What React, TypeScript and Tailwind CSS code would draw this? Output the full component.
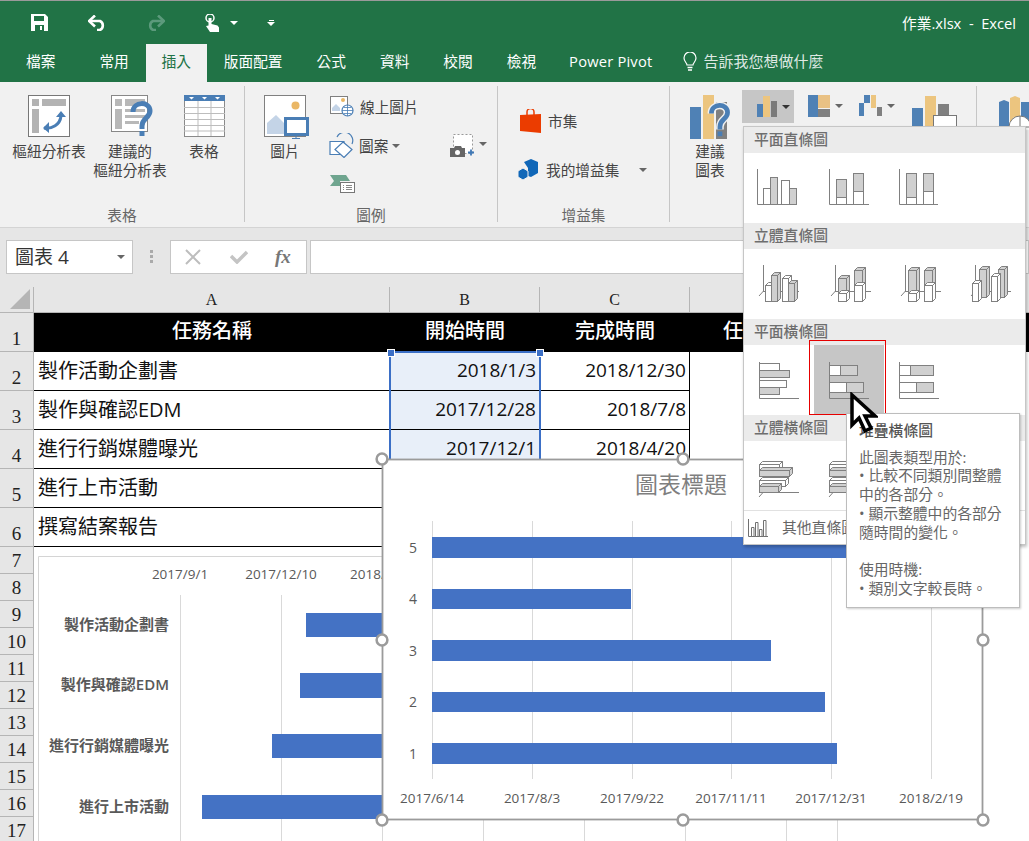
import React from 'react';

const Caret = ({ color = '#666' }: { color?: string }) => (
  <svg width="8" height="4" viewBox="0 0 8 4" className="shrink-0"><path d="M0 0h8L4 4z" fill={color} /></svg>
);

const Save = () => (
  <svg width="17" height="17" viewBox="0 0 17 17"><path d="M0 0h14l3 3v14H0z" fill="#fff" /><path d="M3 2h10v5H3z" fill="#217346" /><path d="M4 11h9v6H4z" fill="#217346" /><path d="M9 12h2v4H9z" fill="#fff" /></svg>
);
const Undo = ({ color = '#fff' }: { color?: string }) => (
  <svg width="19" height="16" viewBox="0 0 19 16" fill="none"><path d="M2 6h10a5 5 0 0 1 0 9H9" stroke={color} strokeWidth="2.6" /><path d="M7 0.5L1 6l6 5.5" stroke={color} strokeWidth="2.6" /></svg>
);
const Redo = ({ color = '#fff' }: { color?: string }) => (
  <svg width="19" height="16" viewBox="0 0 19 16" fill="none"><path d="M17 6H7a5 5 0 0 0 0 9h3" stroke={color} strokeWidth="2.6" /><path d="M12 0.5L18 6l-6 5.5" stroke={color} strokeWidth="2.6" /></svg>
);
const Touch = () => (
  <svg width="15" height="18" viewBox="0 0 15 18"><circle cx="5" cy="4" r="4" fill="none" stroke="#fff" strokeWidth="1.5" /><path d="M3.5 4h3v6l6 1.5 1.5 2V18H5L1 12l2.5-.5z" fill="#fff" /></svg>
);
const Bulb = () => (
  <svg width="14" height="20" viewBox="0 0 14 20" fill="none" stroke="#fff" strokeWidth="1.2"><path d="M4 13c0-2-3-3.500-3-7a6 6 0 0 1 12 0c0 3.500-3 5-3 7z" /><path d="M4.500 15.500h5M5 18h4" strokeWidth="1.500" /></svg>
);

const Pivot = () => (
  <svg width="42" height="42" viewBox="0 0 42 42"><rect x=".5" y=".5" width="41" height="41" fill="#fff" stroke="#777" /><path d="M4 4h7v7H4zM14 4h24v7H14zM4 14h7v24H4z" fill="#b3b3b3" /><path d="M16 33c8 1 16-3 17-12" fill="none" stroke="#4a7eb5" strokeWidth="3" /><path d="M28 22l5-6 5 6zM21 27l-6 6 6 5z" fill="#4a7eb5" /></svg>
);
const Question = ({ color = '#4a7eb5' }: { color?: string }) => (
  <g fill="none" stroke={color} strokeWidth="5"><path d="M-8-8c0-11 17-11 17-1 0 7-8 7-8 15v3" /><path d="M1 11v5" /></g>
);
const PivotHelp = () => (
  <svg width="45" height="45" viewBox="0 0 45 45"><rect x=".5" y=".5" width="36" height="36" fill="#fff" stroke="#888" /><path d="M4 4h7v7H4zM14 4h20v7H14zM4 14h7v20H4zM14 14h20v3H14zM14 20h20v3H14zM14 26h14v3H14z" fill="#b8b8b8" /><g transform="translate(30 25)"><Question /></g></svg>
);
const TableIcon = () => (
  <svg width="41" height="42" viewBox="0 0 41 42"><rect x=".5" y=".5" width="40" height="41" fill="#fff" stroke="#8a8a8a" /><rect width="41" height="6" fill="#4a7eb5" /><path d="M5 2h5L7.500 4.500zM18 2h5l-2.500 2.500zM31 2h5l-2.500 2.500z" fill="#fff" /><path d="M14 6v35M27 6v35M0 12.500h41M0 18.500h41M0 24.500h41M0 30.500h41M0 36h41" stroke="#bdbdbd" fill="none" /></svg>
);
const Picture = () => (
  <svg width="46" height="46" viewBox="0 0 46 46"><rect x=".5" y=".5" width="41" height="41" fill="#fff" stroke="#808080" /><circle cx="31.500" cy="10.500" r="4" fill="#eab766" /><path d="M3 39V28l9-8 8 8 2-2v13z" fill="#c4d4e7" /><rect x="21.500" y="23.500" width="22" height="16" fill="#fff" stroke="#4a7eb5" strokeWidth="3" /><path d="M32 40v3m-4 .5h8" stroke="#4a7eb5" /></svg>
);
const OnlinePicture = () => (
  <svg width="24" height="21" viewBox="0 0 24 21"><rect x=".5" y=".5" width="17" height="17" fill="#fff" stroke="#808080" /><circle cx="13" cy="4" r="2" fill="#eab766" /><path d="M2 15v-3l4-4 4 4v3z" fill="#c4d4e7" /><circle cx="17.500" cy="14.500" r="5.500" fill="#fff" stroke="#4a7eb5" strokeWidth="1.200" /><path d="M12 14.500h11M17.500 9v11M14 11.500h7M14 17.500h7" stroke="#4a7eb5" fill="none" strokeWidth=".8" /></svg>
);
const Shapes = () => (
  <svg width="26" height="25" viewBox="0 0 26 25" fill="none" stroke="#4a7eb5" strokeWidth="1.200"><path d="M8 4a8 8 0 1 1 15 7" /><path d="M1 8.500h14v13H1z" fill="#fff" /><path d="M14 9l9 7.500-8 8-9-8z" fill="#fff" /></svg>
);
const SmartArt = () => (
  <svg width="25" height="19" viewBox="0 0 25 19"><path d="M0 1h16l4 6H10v5H0l4-5z" fill="#6fa58f" /><rect x="10.500" y="8.500" width="14" height="10" fill="#fff" stroke="#777" /><path d="M13 11.500h1M16 11.500h6M13 13.500h1M16 13.500h6M13 15.500h1M16 15.500h6" stroke="#888" /></svg>
);
const Camera = () => (
  <svg width="27" height="24" viewBox="0 0 27 24"><rect x="3.500" y=".5" width="19" height="19" fill="#fff" stroke="#999" strokeDasharray="2 2" /><path d="M0 14h4l1-2h6l1 2h3v9H0z" fill="#666" /><circle cx="7.500" cy="18.500" r="2.500" fill="#fff" /><path d="M18 18.500h6M21 15.500v6" stroke="#3f78b5" strokeWidth="1.800" /></svg>
);
const Store = () => (
  <svg width="22" height="24" viewBox="0 0 22 24"><path d="M0 6l21-1v19L0 22z" fill="#eb3c00" /><path d="M7 7V3a3 3 0 0 1 7 0v4" fill="none" stroke="#eb3c00" strokeWidth="1.500" /></svg>
);
const Addin = () => (
  <svg width="21" height="21" viewBox="0 0 21 21"><path d="M6 3l7-3 7 3v11l-7 4-3-1V9z" fill="#1067b8" /><path d="M0 12l5-3 5 3v6l-5 3-5-3z" fill="#1067b8" stroke="#f1f1f1" /></svg>
);
const ChartHelp = () => (
  <svg width="44" height="45" viewBox="0 0 44 45"><path d="M0 12h11v32H0z" fill="#4f81b5" /><path d="M13 0h11v44H13z" fill="#ecc57f" /><path d="M26 7h11v37H26z" fill="#808080" /><g transform="translate(29 26) scale(.95)"><g fill="none" stroke="#f1f1f1" strokeWidth="8"><path d="M-8-8c0-11 17-11 17-1 0 7-8 7-8 15v3" /></g><Question /></g></svg>
);
const ColumnSmall = () => (
  <svg width="20" height="21" viewBox="0 0 20 21"><path d="M0 8h6v13H0z" fill="#4f81b5" /><path d="M6 0h7v21H6z" fill="#ecc57f" /><path d="M14 5h6v16h-6z" fill="#7a7a7a" /></svg>
);
const Hier = () => (
  <svg width="22" height="22" viewBox="0 0 22 22"><path d="M0 0h10v22H0z" fill="#4f81b5" /><path d="M10 0h12v13H10z" fill="#e9c184" /><path d="M10 14h12v8H10z" fill="#808080" /></svg>
);
const Waterfall = () => (
  <svg width="23" height="21" viewBox="0 0 23 21"><path d="M0 8h5v13H0zM5 0h6v8H5z" fill="#4f81b5" /><path d="M12 0h5v13h-5z" fill="#ecc57f" /><path d="M18 12h5v9h-5z" fill="#808080" /></svg>
);
const PivotChart = () => (
  <svg width="45" height="30" viewBox="0 0 45 30"><path d="M0 12h11v18H0z" fill="#4f81b5" /><path d="M13 0h11v30H13z" fill="#ecc57f" /><path d="M26 8h11v22H26z" fill="#808080" /><rect x="21.500" y="19.500" width="23" height="11" fill="#fff" stroke="#777" /></svg>
);
const MapIcon = () => (
  <svg width="34" height="35" viewBox="0 0 34 35"><path d="M0 7l5-2 5 2v28H0z" fill="#4f81b5" /><path d="M11 3l5-2 5 2v32H11z" fill="#ecc57f" /><path d="M22 7h12v28H22z" fill="#4f81b5" /><circle cx="21" cy="32" r="11" fill="#fff" stroke="#777" /><path d="M10 32h22M21 21v22" stroke="#777" /></svg>
);

const LINE = '#808080';
const GRAY = '#d0d0d0';

// 2D chart glyphs, drawn in a 70x70 gallery cell
type R = [number, number, number, number, string];
const Flat = ({ bars, axis }: { bars: R[]; axis: [number, number, number, number] }) => (
  <svg width="70" height="70" viewBox="0 0 70 70" className="shrink-0">
    {bars.map(([x, y, w, h, f], i) => (
      <rect key={i} x={x + 0.5} y={y + 0.5} width={w} height={h} fill={f} stroke={LINE} />
    ))}
    <path d={`M${axis[0] + 0.5} ${axis[1]}V${axis[2] + 0.5}H${axis[3]}`} fill="none" stroke={LINE} />
  </svg>
);

const Box = ({ x, y, w, h, f, d = 3 }: { x: number; y: number; w: number; h: number; f: string; d?: number }) => (
  <g stroke={LINE} fill={f}>
    <path d={`M${x + 0.5} ${y + 0.5}l${d} -${d}h${w}l-${d} ${d}z`} />
    <path d={`M${x + w + 0.5} ${y + 0.5}l${d} -${d}v${h}l-${d} ${d}z`} />
    <rect x={x + 0.5} y={y + 0.5} width={w} height={h} />
  </g>
);

const Solid = ({ children, ax = 21 }: { children: React.ReactNode; ax?: number }) => (
  <svg width="70" height="70" viewBox="0 0 70 70" className="shrink-0">
    <path d={`M${ax + 0.5} 16V42L${ax - 4} 47M${ax} 42.500H${ax + 36}`} fill="none" stroke={LINE} />
    {children}
  </svg>
);

const SolidBar = ({ ax = 15 }: { ax?: number }) => (
  <svg width="70" height="70" viewBox="0 0 70 70" className="shrink-0">
    <path d={`M${ax} 56L${ax + 4} 51.500H${ax + 40}`} fill="none" stroke={LINE} />
    <Box x={ax} y={23} w={20} h={6} f="#fff" />
    <Box x={ax} y={29} w={30} h={6} f={GRAY} />
    <Box x={ax} y={39} w={26} h={6} f="#fff" />
    <Box x={ax} y={45} w={19} h={6} f={GRAY} />
  </svg>
);

const GalleryHead = ({ children }: { children: React.ReactNode }) => (
  <div className="h-[26px] bg-[#ebebeb] pl-[10px] leading-[25px] text-[14.8px] font-medium text-[#6e6e6e]">{children}</div>
);

const Gallery = () => (
  <div className="absolute left-[743px] top-[126px] z-10 w-[283px] h-[419px] bg-white border border-[#c6c6c6] shadow-[1px_2px_3px_rgba(0,0,0,0.25)] flex flex-col">
    <GalleryHead>平面直條圖</GalleryHead>
    <div className="flex h-[70px]">
      <Flat axis={[13, 16, 51, 52]} bars={[[19, 35, 7, 16, '#fff'], [26, 24, 7, 27, GRAY], [37, 27, 8, 24, '#fff'], [45, 35, 7, 16, GRAY]]} />
      <Flat axis={[15, 16, 51, 55]} bars={[[22, 26, 10, 18, GRAY], [22, 44, 10, 7, '#fff'], [39, 20, 10, 18, GRAY], [39, 38, 10, 13, '#fff']]} />
      <Flat axis={[15, 16, 51, 54]} bars={[[22, 20, 10, 24, GRAY], [22, 44, 10, 7, '#fff'], [39, 20, 10, 18, GRAY], [39, 38, 10, 13, '#fff']]} />
    </div>
    <GalleryHead>立體直條圖</GalleryHead>
    <div className="flex h-[70px]">
      <Solid ax={19}>
        <Box x={21} y={36} w={6} h={16} f="#fff" />
        <Box x={27} y={26} w={6} h={26} f={GRAY} />
        <Box x={38} y={29} w={6} h={23} f="#fff" />
        <Box x={44} y={34} w={6} h={18} f={GRAY} />
      </Solid>
      <Solid>
        <Box x={24} y={29} w={8} h={15} f={GRAY} />
        <Box x={24} y={44} w={8} h={8} f="#fff" />
        <Box x={40} y={21} w={8} h={15} f={GRAY} />
        <Box x={40} y={36} w={8} h={16} f="#fff" />
      </Solid>
      <Solid>
        <Box x={24} y={21} w={8} h={23} f={GRAY} />
        <Box x={24} y={44} w={8} h={8} f="#fff" />
        <Box x={40} y={21} w={8} h={15} f={GRAY} />
        <Box x={40} y={36} w={8} h={16} f="#fff" />
      </Solid>
      <Solid>
        <Box x={25} y={20} w={7} h={28} f={GRAY} />
        <Box x={44} y={20} w={6} h={28} f={GRAY} />
        <Box x={18} y={34} w={6} h={18} f="#fff" />
        <Box x={37} y={27} w={6} h={25} f="#fff" />
      </Solid>
    </div>
    <GalleryHead>平面橫條圖</GalleryHead>
    <div className="flex h-[70px]">
      <Flat axis={[15, 17, 53, 55]} bars={[[15, 18, 20, 7, '#fff'], [15, 25, 30, 7, GRAY], [15, 35, 27, 7, '#fff'], [15, 42, 20, 7, GRAY]]} />
      <div className="relative w-[70px] h-[70px] bg-[#c6c6c6] shrink-0">
        <Flat axis={[15, 17, 53, 55]} bars={[[15, 20, 11, 10, '#fff'], [26, 20, 17, 10, GRAY], [15, 37, 17, 10, '#fff'], [32, 37, 17, 10, GRAY]]} />
        <div className="absolute z-[1] left-[-5px] right-[-2px] top-[-5px] bottom-0 border border-[#e60000]" />
      </div>
      <Flat axis={[15, 17, 53, 55]} bars={[[15, 20, 11, 10, '#fff'], [26, 20, 23, 10, GRAY], [15, 37, 17, 10, '#fff'], [32, 37, 17, 10, GRAY]]} />
    </div>
    <GalleryHead>立體橫條圖</GalleryHead>
    <div className="flex h-[70px] border-b border-[#e1e1e1]">
      <SolidBar />
      <SolidBar />
    </div>
    <div className="flex items-center h-[33px] pl-[4px] text-[14.8px] text-[#666]">
      <svg width="20" height="18" viewBox="0 0 20 18" fill="#fff" stroke="#707070"><path d="M.5 0v17.500H20" fill="none" /><path d="M3.500 8.500h2.500v9H3.500zM7.500 3.500H10v14H7.500zM11.500 10.500H14v7h-2.500zM15.500 1.500H18v16h-2.500z" /></svg>
      <span className="ml-[14px] whitespace-nowrap">其他直條圖</span>
    </div>
  </div>
);

const Tip = () => (
  <div className="absolute left-[846px] top-[413px] z-20 w-[174px] h-[195px] bg-white border border-[#bdbdbd] shadow-[1px_1px_2px_rgba(0,0,0,0.2)] pl-[12px] pt-[7px] text-[14.8px] leading-[18.7px] text-[#666]">
    <div className="font-medium text-[#555] mb-[8px]">堆疊橫條圖</div>
    <div>此圖表類型用於:</div>
    <div>• 比較不同類別間整體</div>
    <div>中的各部分。</div>
    <div>• 顯示整體中的各部分</div>
    <div>隨時間的變化。</div>
    <div className="h-[19px]" />
    <div>使用時機:</div>
    <div>• 類別文字較長時。</div>
  </div>
);

const Pointer = () => (
  <svg className="absolute left-[848px] top-[392px] z-30" width="30" height="44" viewBox="0 0 30 44">
    <path d="M4 3v30l7-7 6 13 6-3-6-12h10z" fill="#fff" stroke="#000" strokeWidth="3.500" />
  </svg>
);

const Handle = ({ cx, cy }: { cx: number; cy: number }) => (
  <circle cx={cx} cy={cy} r="5.400" fill="#fff" stroke="#9b9b9b" strokeWidth="2.500" />
);

// the selected chart, its own coordinates start at the frame's top-left corner
const MainChart = () => {
  const grid = [50, 150, 250, 349, 449, 549];
  const dates = ['2017/6/14', '2017/8/3', '2017/9/22', '2017/11/11', '2017/12/31', '2018/2/19'];
  const bars = [
    { n: '5', y: 78, h: 21, w: 440 },
    { n: '4', y: 130, h: 20, w: 199 },
    { n: '3', y: 181, h: 21, w: 339 },
    { n: '2', y: 233, h: 20, w: 393 },
    { n: '1', y: 284, h: 21, w: 405 },
  ];
  return (
    <svg className="absolute left-[382px] top-[459px] overflow-visible" width="601" height="361" viewBox="0 0 601 361">
      <rect x=".5" y=".5" width="600" height="360" fill="#fff" stroke="#9b9b9b" strokeWidth="1.800" />
      <text x="299" y="34" textAnchor="middle" fontSize="23" fill="#7f7f7f">圖表標題</text>
      {grid.map(x => <line key={x} x1={x + 0.5} x2={x + 0.5} y1="62" y2="320" stroke="#d9d9d9" />)}
      {bars.map(b => (
        <g key={b.n}>
          <rect x="50" y={b.y} width={b.w} height={b.h} fill="#4472c4" />
          <text x="31" y={b.y + b.h / 2 + 5} textAnchor="middle" fontSize="14" fill="#595959">{b.n}</text>
        </g>
      ))}
      {dates.map((d, i) => <text key={d} x={grid[i]} y="344" textAnchor="middle" fontSize="13.500" fill="#595959">{d}</text>)}
      {[[0, 0], [301, 0], [0, 181], [601, 181], [0, 361], [301, 361], [601, 361]].map(([x, y]) => <Handle key={`${x}-${y}`} cx={x} cy={y} />)}
    </svg>
  );
};

// the chart behind it on the sheet, only its part left of the selected chart shows
const BackChart = () => {
  const rows = [
    { t: '製作活動企劃書', y: 57, h: 24, x: 268 },
    { t: '製作與確認EDM', y: 117, h: 25, x: 262 },
    { t: '進行行銷媒體曝光', y: 178, h: 24, x: 234 },
    { t: '進行上市活動', y: 239, h: 24, x: 164 },
  ];
  return (
    <svg className="absolute left-[38px] top-[556px]" width="991" height="285" viewBox="0 0 991 285">
      <path d="M.5 285V.5H344" fill="#fff" stroke="#d4d4d4" />
      {[142, 243, 344, 445, 546, 647, 748, 799].map(x => <line key={x} x1={x + 0.5} x2={x + 0.5} y1="39" y2="285" stroke="#d9d9d9" />)}
      <text x="142" y="23" textAnchor="middle" fontSize="13.500" fill="#595959">2017/9/1</text>
      <text x="243" y="23" textAnchor="middle" fontSize="13.500" fill="#595959">2017/12/10</text>
      <text x="312" y="23" fontSize="13.500" fill="#595959">2018/</text>
      {rows.map(r => (
        <g key={r.t}>
          <text x="131" y={r.y + 17} textAnchor="end" fontSize="15" fontWeight="600" fill="#595959">{r.t}</text>
          <rect x={r.x} y={r.y} width={346 - r.x} height={r.h} fill="#4472c4" />
        </g>
      ))}
    </svg>
  );
};

const HeadCell = ({ children, w }: { children?: React.ReactNode; w: string }) => (
  <div className={`${w} h-[25px] shrink-0 border-r border-[#b5b5b5] text-center font-['Liberation_Serif',serif] text-[16px] leading-[25px] text-[#222]`}>{children}</div>
);

const data = [
  ['製作活動企劃書', '2018/1/3', '2018/12/30'],
  ['製作與確認EDM', '2017/12/28', '2018/7/8'],
  ['進行行銷媒體曝光', '2017/12/1', '2018/4/20'],
  ['進行上市活動', '', ''],
  ['撰寫結案報告', '', ''],
];

const RowNum = ({ n, h }: { n: number; h: string }) => (
  <div className={`w-[34px] ${h} shrink-0 bg-[#e6e6e6] border-r border-b border-[#b5b5b5] flex items-end justify-center font-['Liberation_Serif',serif] text-[19px] leading-[25px] text-[#222]`}>{n}</div>
);

const Sheet = () => (
  <div className="bg-white">
    <div className="flex h-[25px] bg-[#e6e6e6] border-b border-[#b5b5b5] box-content">
      <div className="w-[34px] h-[25px] shrink-0 border-r border-[#b5b5b5] flex items-end justify-end pr-[3px] pb-[3px]">
        <svg width="20" height="20" viewBox="0 0 20 20"><path d="M20 0v20H0z" fill="#b5b5b5" /></svg>
      </div>
      <HeadCell w="w-[356px]">A</HeadCell>
      <HeadCell w="w-[150px]">B</HeadCell>
      <HeadCell w="w-[150px]">C</HeadCell>
    </div>
    <div className="flex h-[39px]">
      <RowNum n={1} h="h-[39px]" />
      <div className="flex flex-1 bg-black text-white text-[20px] font-medium leading-[36px] text-center">
        <div className="w-[356px] shrink-0">任務名稱</div>
        <div className="w-[150px] shrink-0">開始時間</div>
        <div className="w-[150px] shrink-0">完成時間</div>
        <div className="pl-[33px] shrink-0">任</div>
      </div>
    </div>
    {data.map((r, i) => (
      <div key={r[0]} className="flex h-[39px]">
        <RowNum n={i + 2} h="h-[39px]" />
        <div className="w-[355px] shrink-0 border-b border-black pl-[4px] text-[20px] leading-[37px] text-[#111] whitespace-nowrap">{r[0]}</div>
        <div className={`w-[151px] shrink-0 border-b border-black pr-[4px] text-right text-[19px] leading-[37px] text-[#111] ${i < 3 ? 'bg-[#e8eff9]' : ''}`}>{r[1]}</div>
        <div className="w-[150px] shrink-0 border-b border-r border-black pr-[3px] text-right text-[19px] leading-[37px] text-[#111]">{r[2]}</div>
      </div>
    ))}
    {[7, 8, 9, 10, 11, 12, 13, 14, 15, 16, 17].map(n => <RowNum key={n} n={n} h="h-[27px]" />)}
  </div>
);

const RibbonGroup = ({ w, label, children }: { w: string; label?: string; children: React.ReactNode }) => (
  <div className={`${w} h-[136px] mt-[4px] shrink-0 flex flex-col border-r border-[#c6c6c6]`}>
    <div className="flex-1 flex min-h-0">{children}</div>
    <div className="h-[16px] leading-[18px] text-center text-[#666] text-[14.67px]">{label}</div>
  </div>
);

const BigBtn = ({ w, icon, lines }: { w: string; icon: React.ReactNode; lines: string[] }) => (
  <div className={`${w} shrink-0 flex flex-col items-center pt-[9px] text-[14.67px] leading-[19px] text-[#444]`}>
    <div className="h-[47px] shrink-0">{icon}</div>
    {lines.map(l => <div key={l} className="whitespace-nowrap">{l}</div>)}
  </div>
);

const tabs = ['版面配置', '公式', '資料', '校閱', '檢視'];

export default function App() {
  return (
    <div className="relative w-[1029px] h-[841px] overflow-hidden bg-white font-['Open_Sans','Noto_Sans_CJK_TC',sans-serif]">
      {/* title bar */}
      <div className="h-[44px] bg-[#217346] border-t border-[#9a9a9a] flex items-center text-white">
        <div className="ml-[31px]"><Save /></div>
        <div className="ml-[40px]"><Undo /></div>
        <div className="ml-[39px]"><Redo color="#5c9a7c" /></div>
        <div className="ml-[40px]"><Touch /></div>
        <div className="ml-[10px]"><Caret color="#fff" /></div>
        <div className="ml-[29px] flex flex-col items-center gap-[1px]">
          <div className="w-[5px] h-[1px] bg-white" />
          <Caret color="#fff" />
        </div>
        <div className="ml-auto mr-[13px] text-[14.67px] whitespace-pre">作業.xlsx  -  Excel</div>
      </div>
      {/* tabs */}
      <div className="h-[38px] bg-[#217346] flex text-white text-[14.7px] leading-[35px]">
        <div className="pl-[26px] pr-[16px]">檔案</div>
        <div className="pl-[28px] pr-[17px]">常用</div>
        <div className="w-[61px] text-center bg-[#f1f1f1] text-[#217346]">插入</div>
        {tabs.map(t => <div key={t} className="px-[17px] whitespace-nowrap">{t}</div>)}
        <div className="pl-[16px] pr-[17px] whitespace-nowrap tracking-[0.2px]">Power Pivot</div>
        <div className="ml-[14px] flex items-center h-[35px] text-[15px] text-[#dfe9e3]">
          <Bulb />
          <span className="ml-[6px]">告訴我您想做什麼</span>
        </div>
      </div>
      {/* ribbon */}
      <div className="h-[146px] bg-[#f1f1f1] border-b border-[#d4d4d4] flex">
        <RibbonGroup w="w-[245px]" label="表格">
          <div className="w-[5px]" />
          <BigBtn w="w-[88px]" icon={<Pivot />} lines={['樞紐分析表']} />
          <BigBtn w="w-[74px]" icon={<div className="ml-[7px]"><PivotHelp /></div>} lines={['建議的', '樞紐分析表']} />
          <BigBtn w="w-[74px]" icon={<TableIcon />} lines={['表格']} />
        </RibbonGroup>
        <RibbonGroup w="w-[253px]" label="圖例">
          <div className="w-[2px]" />
          <BigBtn w="w-[76px]" icon={<div className="ml-[4px]"><Picture /></div>} lines={['圖片']} />
          <div className="w-[7px]" />
          <div className="flex flex-col text-[14.67px] text-[#444] pt-[10px] w-[120px] shrink-0">
            <div className="flex items-center h-[21px] gap-[6px]"><OnlinePicture /><span>線上圖片</span></div>
            <div className="flex items-center h-[25px] mt-[16px] gap-[4px] -ml-[1px]"><Shapes /><span>圖案</span><Caret /></div>
            <div className="mt-[16px]"><SmartArt /></div>
          </div>
          <div className="pt-[48px] flex items-start gap-[2px]"><Camera /><div className="mt-[8px]"><Caret /></div></div>
        </RibbonGroup>
        <RibbonGroup w="w-[172px]" label="增益集">
          <div className="pl-[20px] flex flex-col text-[14.67px] text-[#444]">
            <div className="flex items-center h-[24px] mt-[23px] gap-[6px] pl-[2px]"><Store /><span>市集</span></div>
            <div className="flex items-center h-[21px] mt-[26px] gap-[7px]"><Addin /><span>我的增益集</span><span className="ml-[13px]"><Caret /></span></div>
          </div>
        </RibbonGroup>
        <RibbonGroup w="w-[307px]">
          <div className="w-[8px]" />
          <BigBtn w="w-[64px]" icon={<div className="ml-[4px]"><ChartHelp /></div>} lines={['建議', '圖表']} />
          <div className="w-[52px] h-[33px] mt-[4px] bg-[#c6c6c6] flex items-center pl-[15px] gap-[5px] shrink-0"><ColumnSmall /><Caret color="#333" /></div>
          <div className="ml-[14px] mt-[9px] flex items-end h-[22px] gap-[5px] shrink-0"><Hier /><div className="mb-[9px]"><Caret /></div></div>
          <div className="ml-[16px] mt-[9px] flex items-end h-[21px] gap-[5px] shrink-0"><Waterfall /><div className="mb-[8px]"><Caret /></div></div>
          <div className="ml-[17px] mt-[10px] shrink-0"><PivotChart /></div>
        </RibbonGroup>
        <div className="pl-[22px] pt-[13px]"><MapIcon /></div>
      </div>
      {/* formula bar */}
      <div className="h-[59px] bg-[#e6e6e6] pt-[12px] pl-[6px] flex items-start">
        <div className="w-[127px] h-[34px] bg-white border border-[#c6c6c6] flex items-center pl-[8px] pr-[7px] text-[19px] text-[#333]">
          <span className="flex-1">圖表 4</span>
          <Caret />
        </div>
        <div className="w-[3px] h-[13px] ml-[17px] mt-[10px] border-y-[3px] border-[#aaa] relative after:content-[''] after:absolute after:left-0 after:top-[2px] after:w-[3px] after:h-[3px] after:bg-[#aaa]" />
        <div className="w-[137px] h-[34px] ml-[17px] bg-white border border-[#c6c6c6] flex items-center pl-[14px] text-[#b5b5b5]">
          <svg width="16" height="16" viewBox="0 0 16 16" stroke="#bdbdbd" strokeWidth="2"><path d="M1 1l14 14M15 1L1 15" /></svg>
          <svg className="ml-[29px]" width="18" height="14" viewBox="0 0 18 14" fill="none" stroke="#c4c4c4" strokeWidth="3.500"><path d="M1 6l6 6L17 2" /></svg>
          <span className="ml-[27px] font-['Liberation_Serif',serif] italic font-bold text-[19px] text-[#777]">fx</span>
        </div>
        <div className="flex-1 h-[34px] ml-[3px] bg-white border border-[#c6c6c6]" />
      </div>
      <Sheet />

      {/* floating sheet objects */}
      <div className="absolute left-[389px] top-[351px] w-[152px] h-[108px] border-x-[2.5px] border-t-2 border-[#3b6fc6]" />
      <div className="absolute left-[387px] top-[349px] w-[6px] h-[6px] bg-[#3b6fc6] border border-white box-content" />
      <div className="absolute left-[536px] top-[349px] w-[6px] h-[6px] bg-[#3b6fc6] border border-white box-content" />
      <BackChart />
      <MainChart />
      <Gallery />
      <Tip />
      <Pointer />
    </div>
  );
}
